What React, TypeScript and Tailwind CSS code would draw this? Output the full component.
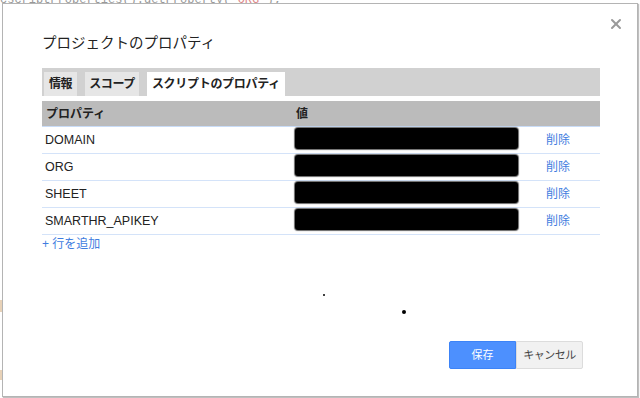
import { X } from 'lucide-react';

const rows = ['DOMAIN', 'ORG', 'SHEET', 'SMARTHR_APIKEY'];

const font = { fontFamily: '"Liberation Sans", "Noto Sans CJK JP", sans-serif' };

export default function App() {
    return (
        <div className="relative w-[640px] h-[398px] overflow-hidden bg-white" style={font}>
            {/* code editor peeking out behind the dialog */}
            <div className="absolute left-0 -top-[9px] text-[12px] text-[#999] whitespace-nowrap font-['Liberation_Mono']">
                cscriptProperties().getProperty(<span className="text-[#d88]">'ORG'</span>);
            </div>
            <div className="absolute left-0 top-[300px] w-[2px] h-[12px] bg-[#e8d2b8]" />
            <div className="absolute left-0 top-[370px] w-[2px] h-[10px] bg-[#e8d2b8]" />

            <div className="relative mt-[3px] ml-[2px] w-[636px] h-[394px] bg-white border border-[#b4b4b4] shadow-[1px_1px_1px_rgba(0,0,0,0.25)]">
                <X className="absolute right-[13px] top-[12px] w-[16px] h-[16px] text-[#9a9a9a]" strokeWidth={3} />

                <div className="pl-[39px] pr-[37px] pt-[29px]">
                    <h1 className="text-[14.5px] leading-[20px] text-[#222]">プロジェクトのプロパティ</h1>

                    {/* tabs */}
                    <div className="mt-[15px] h-[28px] bg-[#d1d1d1] flex items-end gap-[8px] pl-[2px]">
                        <div className="h-[24px] px-[5px] bg-[#e6e6e6] text-[12px] font-bold tracking-[-0.4px] text-[#222] flex items-center">情報</div>
                        <div className="h-[24px] px-[4px] bg-[#e6e6e6] text-[12px] font-bold tracking-[-0.4px] text-[#222] flex items-center">スコープ</div>
                        <div className="h-[24px] px-[5px] bg-white text-[12px] font-bold tracking-[-0.3px] text-[#222] flex items-center">スクリプトのプロパティ</div>
                    </div>

                    {/* table */}
                    <div className="mt-[5px] text-[12.5px] text-[#222]">
                        <div className="h-[26px] bg-[#bbbbbb] flex items-center text-[12px] font-bold border-b border-[#c9dcf7]">
                            <div className="w-[250px] pl-[4px]">プロパティ</div>
                            <div className="pl-[4px]">値</div>
                        </div>
                        {rows.map((r) => (
                            <div key={r} className="h-[27px] flex items-center border-b border-[#d4e3f9]">
                                <div className="w-[250px] pl-[3px]">{r}</div>
                                <div className="w-[254px] pl-[3px]">
                                    <div className="relative -top-[2px] w-[223px] h-[21px] bg-black rounded-[3px] shadow-[0_0_1px_1px_rgba(0,0,0,0.6)]" />
                                </div>
                                <a className="text-[12px] text-[#3f7de0]">削除</a>
                            </div>
                        ))}
                        <div className="text-[#3f7de0] text-[12px] leading-[18px]">+ 行を追加</div>
                    </div>
                </div>

                {/* stray dots */}
                <div className="absolute left-[320px] top-[290px] w-[2px] h-[2px] rounded-full bg-black" />
                <div className="absolute left-[399px] top-[306px] w-[4px] h-[4px] rounded-full bg-black" />

                {/* buttons */}
                <div className="absolute left-[446px] top-[337px] flex">
                    <button className="w-[67px] h-[28px] bg-[#4d90fe] text-white text-[11px] rounded-l-[2px] border border-[#3c83f7]">保存</button>
                    <button className="w-[67px] h-[28px] bg-[#f1f1f1] text-[#444] text-[11px] tracking-[-0.5px] rounded-r-[2px] border border-[#dcdcdc]">キャンセル</button>
                </div>
            </div>
        </div>
    );
}
